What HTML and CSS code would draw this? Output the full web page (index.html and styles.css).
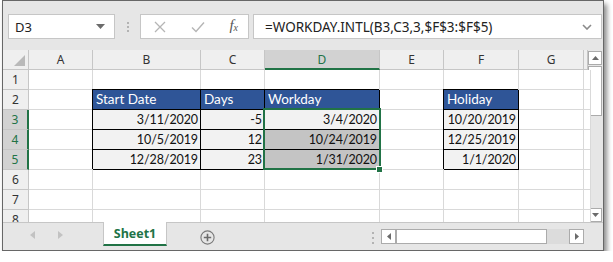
FILE: index.html
```html
<!DOCTYPE html>
<html lang="en">
<head>
    <meta charset="UTF-8">
    <title>WORKDAY.INTL - Excel</title>
    <link rel="stylesheet" href="styles.css">
</head>
<body>

    <div class="window">

        <!-- formula bar -->
        <div class="formula-bar">
            <div class="name-box">
                <span>D3</span>
                <svg width="9" height="5" viewBox="0 0 9 5"><path d="M0 0h9L4.5 5z" fill="#6b6b6b"/></svg>
            </div>
            <div class="grip"><i></i><i></i><i></i></div>
            <div class="fx-box">
                <svg width="12" height="12" viewBox="0 0 12 12"><path d="M1 1l10 10M11 1L1 11" stroke="#b5b5b5" stroke-width="1.3"/></svg>
                <svg width="14" height="12" viewBox="0 0 14 12"><path d="M1 6.5l4 4L13 1.5" stroke="#b5b5b5" stroke-width="1.4" fill="none"/></svg>
                <span class="fx">f<sub>x</sub></span>
            </div>
            <div class="formula-input">
                <span>=WORKDAY.INTL(B3,C3,3,$F$3:$F$5)</span>
                <svg width="10" height="6" viewBox="0 0 10 6"><path d="M1 1l4 4 4-4" stroke="#8a8a8a" stroke-width="1.6" fill="none"/></svg>
            </div>
        </div>

        <!-- sheet -->
        <div class="sheet-area">
            <div class="grid">
                <div class="cell corner"><svg width="11" height="11" viewBox="0 0 11 11"><path d="M11 0v11H0z" fill="#b9b9b9"/></svg></div>
                <div class="cell hd">A</div>
                <div class="cell hd">B</div>
                <div class="cell hd">C</div>
                <div class="cell hd hd-sel">D</div>
                <div class="cell hd">E</div>
                <div class="cell hd">F</div>
                <div class="cell hd">G</div>
                <div class="cell hd"></div>

                <div class="cell rh">1</div>
                <div class="cell"></div><div class="cell"></div><div class="cell"></div><div class="cell"></div><div class="cell"></div><div class="cell"></div><div class="cell"></div><div class="cell"></div>

                <div class="cell rh">2</div>
                <div class="cell"></div>
                <div class="cell blue">Start Date</div>
                <div class="cell blue">Days</div>
                <div class="cell blue">Workday</div>
                <div class="cell"></div>
                <div class="cell blue">Holiday</div>
                <div class="cell"></div><div class="cell"></div>

                <div class="cell rh rh-sel">3</div>
                <div class="cell"></div>
                <div class="cell data num">3/11/2020</div>
                <div class="cell data num">-5</div>
                <div class="cell data num">3/4/2020</div>
                <div class="cell"></div>
                <div class="cell data num">10/20/2019</div>
                <div class="cell"></div><div class="cell"></div>

                <div class="cell rh rh-sel">4</div>
                <div class="cell"></div>
                <div class="cell data num">10/5/2019</div>
                <div class="cell data num">12</div>
                <div class="cell data num picked">10/24/2019</div>
                <div class="cell"></div>
                <div class="cell data num">12/25/2019</div>
                <div class="cell"></div><div class="cell"></div>

                <div class="cell rh rh-sel">5</div>
                <div class="cell"></div>
                <div class="cell data num">12/28/2019</div>
                <div class="cell data num">23</div>
                <div class="cell data num picked">1/31/2020</div>
                <div class="cell"></div>
                <div class="cell data num">1/1/2020</div>
                <div class="cell"></div><div class="cell"></div>

                <div class="cell rh">6</div>
                <div class="cell"></div><div class="cell"></div><div class="cell"></div><div class="cell"></div><div class="cell"></div><div class="cell"></div><div class="cell"></div><div class="cell"></div>

                <div class="cell rh">7</div>
                <div class="cell"></div><div class="cell"></div><div class="cell"></div><div class="cell"></div><div class="cell"></div><div class="cell"></div><div class="cell"></div><div class="cell"></div>

                <div class="cell rh">8</div>
                <div class="cell"></div><div class="cell"></div><div class="cell"></div><div class="cell"></div><div class="cell"></div><div class="cell"></div><div class="cell"></div><div class="cell"></div>

                <!-- selection D3:D5 -->
                <div class="selection"></div>
                <div class="fill-handle"></div>
            </div>

            <div class="vscroll">
                <div class="sb-btn"><svg width="7" height="4" viewBox="0 0 7 4"><path d="M0 4h7L3.5 0z" fill="#6b6b6b"/></svg></div>
                <div class="sb-thumb"></div>
                <div class="sb-track"></div>
                <div class="sb-btn"><svg width="7" height="4" viewBox="0 0 7 4"><path d="M0 0h7L3.5 4z" fill="#6b6b6b"/></svg></div>
            </div>
        </div>

        <!-- sheet tabs -->
        <div class="tab-bar">
            <div class="tab-nav">
                <svg width="5" height="8" viewBox="0 0 5 8"><path d="M5 0v8L0 4z" fill="#c2c2c2"/></svg>
                <svg width="5" height="8" viewBox="0 0 5 8"><path d="M0 0v8l5-4z" fill="#c2c2c2"/></svg>
            </div>
            <div class="tab">Sheet1</div>
            <div class="add-sheet">
                <svg width="15" height="15" viewBox="0 0 15 15"><circle cx="7.5" cy="7.5" r="6.6" stroke="#7a7a7a" stroke-width="1.1" fill="none"/><path d="M7.5 3.8v7.4M3.8 7.5h7.4" stroke="#6b6b6b" stroke-width="1.6"/></svg>
            </div>
            <div class="grip tab-grip"><i></i><i></i><i></i></div>
            <div class="hscroll">
                <div class="sb-btn"><svg width="4" height="7" viewBox="0 0 4 7"><path d="M4 0v7L0 3.5z" fill="#6b6b6b"/></svg></div>
                <div class="hs-thumb"></div>
                <div class="hs-track"></div>
                <div class="sb-btn"><svg width="4" height="7" viewBox="0 0 4 7"><path d="M0 0v7l4-3.5z" fill="#6b6b6b"/></svg></div>
            </div>
        </div>

    </div>

</body>
</html>
```

FILE: styles.css
```css
body {
    margin: 0;
    background-color: #fff;
    font-family: "Noto Sans", sans-serif;
}

.window {
    margin-left: 2px;
    width: 600px;
    height: 249px;
    border: 1px solid #676767;
    background-color: #e6e6e6;
    box-shadow: 3px 4px 5px rgba(0, 0, 0, 0.45);
    display: flex;
    flex-direction: column;
    overflow: hidden;
}

/* formula bar */
.formula-bar {
    height: 49px;
    flex: none;
    display: flex;
    align-items: flex-start;
    padding: 13px 0 0 5px;
    box-sizing: border-box;
}

.name-box, .fx-box, .formula-input {
    height: 25px;
    box-sizing: border-box;
    background-color: #fff;
    border: 1px solid #c6c6c6;
    display: flex;
    align-items: center;
}

.name-box {
    width: 107px;
    padding: 0 9px 0 6px;
    justify-content: space-between;
    font-size: 13px;
    color: #222;
}

.grip {
    width: 25px;
    height: 25px;
    display: flex;
    flex-direction: column;
    align-items: center;
    justify-content: center;
    gap: 2px;
}

.grip i {
    width: 2px;
    height: 2px;
    background-color: #b3b3b3;
}

.fx-box {
    width: 109px;
    padding: 0 10px 0 13px;
    justify-content: space-between;
}

.fx {
    font-family: "Liberation Serif", serif;
    font-style: italic;
    font-size: 15px;
    color: #555;
    margin-top: -3px;
}

.fx sub {
    font-size: 10px;
    vertical-align: -1px;
}

.formula-input {
    width: 349px;
    margin-left: 4px;
    padding: 0 9px 0 11px;
    justify-content: space-between;
    font-size: 13.5px;
    color: #222;
}

/* sheet grid */
.sheet-area {
    height: 173px;
    flex: none;
    display: flex;
    overflow: hidden;
    border-bottom: 1px solid #c6c6c6;
    box-sizing: border-box;
}

.grid {
    position: relative;
    display: grid;
    grid-template-columns: 26px 64px 108px 64px 115px 64px 75px 65px 4px;
    grid-auto-rows: 20px;
    background-color: #fff;
    font-family: "Lato", sans-serif;
    font-size: 13.5px;
    color: #111;
}

.cell {
    box-sizing: border-box;
    border-right: 1px solid #d9d9d9;
    border-bottom: 1px solid #d9d9d9;
    background-color: #fff;
    display: flex;
    align-items: flex-end;
    padding: 0 3px 2px;
    white-space: nowrap;
    overflow: hidden;
}

.hd, .rh, .corner {
    background-color: #efefef;
    border-color: #c6c6c6;
    font-family: "Noto Sans", sans-serif;
    font-size: 12px;
    color: #333;
    justify-content: center;
    align-items: center;
    padding: 0;
}

.corner {
    justify-content: flex-end;
    align-items: flex-end;
    padding: 0 3px 3px 0;
}

.hd-sel {
    background-color: #d2d2d2;
    border-bottom: 2px solid #217346;
    color: #217346;
}

.rh-sel {
    background-color: #d2d2d2;
    border-right: 2px solid #217346;
    color: #217346;
}

.blue {
    background-color: #2f5597;
    color: #fff;
    border-right-color: #000;
    border-bottom-color: #000;
    box-shadow: -1px -1px 0 #000;
}

.data {
    background-color: #f2f2f2;
    border-right-color: #000;
    border-bottom-color: #000;
    box-shadow: -1px -1px 0 #000;
}

.num {
    justify-content: flex-end;
    padding-right: 2px;
    font-size: 12.5px;
    letter-spacing: -0.1px;
}

.data.picked {
    background-color: #c4c4c4;
}

.selection {
    position: absolute;
    left: 260px;
    top: 58px;
    width: 118px;
    height: 62px;
    box-sizing: border-box;
    border: 2px solid #217346;
}

.fill-handle {
    position: absolute;
    left: 373px;
    top: 116px;
    width: 5px;
    height: 5px;
    background-color: #217346;
    border: 1px solid #fff;
}

/* scrollbars */
.vscroll {
    width: 14px;
    display: flex;
    flex-direction: column;
    background-color: #e6e6e6;
}

.sb-btn {
    width: 14px;
    height: 14px;
    flex: none;
    box-sizing: border-box;
    background-color: #fff;
    border: 1px solid #ababab;
    display: flex;
    align-items: center;
    justify-content: center;
}

.vscroll .sb-btn:first-child {
    margin-top: 1px;
}

.sb-thumb {
    height: 50px;
    box-sizing: border-box;
    margin-top: 1px;
    background-color: #fff;
    border: 1px solid #ababab;
}

.sb-track {
    flex: 1;
}

/* tab bar */
.tab-bar {
    flex: 1;
    display: flex;
    align-items: flex-start;
}

.tab-nav {
    width: 100px;
    height: 24px;
    display: flex;
    align-items: center;
    padding-left: 27px;
    gap: 23px;
    box-sizing: border-box;
}

.tab {
    width: 64px;
    height: 24px;
    margin-top: -1px;
    box-sizing: border-box;
    background-color: #fff;
    border-left: 1px solid #c6c6c6;
    border-right: 1px solid #c6c6c6;
    border-bottom: 2px solid #217346;
    font-family: "Open Sans", sans-serif;
    font-weight: bold;
    font-size: 12.5px;
    color: #217346;
    display: flex;
    align-items: center;
    justify-content: center;
}

.add-sheet {
    width: 15px;
    height: 15px;
    margin: 5px 0 0 33px;
}

.tab-grip {
    height: 14px;
    width: 16px;
    margin: 8px 0 0 150px;
    gap: 3px;
}

.hscroll {
    display: flex;
    margin: 6px 0 0 0;
    width: 203px;
    height: 15px;
    background-color: #dcdcdc;
}

.hscroll .sb-btn {
    height: 15px;
    width: 15px;
}

.hs-thumb {
    width: 151px;
    box-sizing: border-box;
    background-color: #fff;
    border: 1px solid #ababab;
}

.hs-track {
    flex: 1;
}
```
